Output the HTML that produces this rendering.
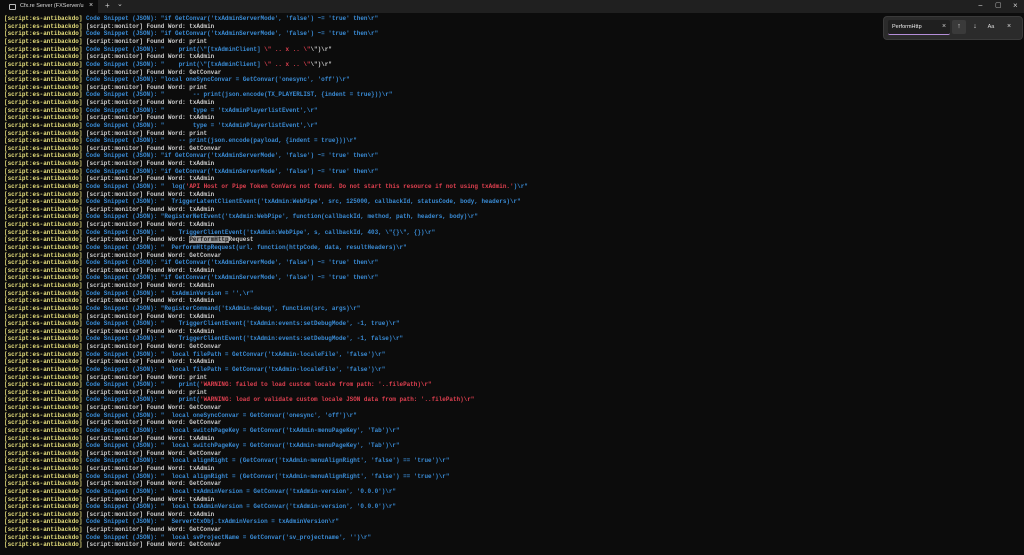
<!DOCTYPE html>
<html><head><meta charset="utf-8"><style>
html,body{margin:0;padding:0;background:#0c0c0c;width:1024px;height:555px;overflow:hidden}
#tb{position:absolute;left:0;top:0;width:1024px;height:13px;background:#202020}
#tab{position:absolute;left:0;top:0;width:98px;height:13px;background:#0c0c0c;font:5.5px "Liberation Sans",sans-serif;color:#ddd}
#tab .t{position:absolute;left:20px;top:3px;white-space:nowrap;width:64px;overflow:hidden}
#tab .i{position:absolute;left:9px;top:4px;width:5px;height:4px;border:1px solid #bbb;border-radius:1px}
#tab .x{position:absolute;left:89px;top:2px;font-size:7px}
.tbi{position:absolute;color:#ccc;font:8px "Liberation Sans",sans-serif}
#term{position:absolute;left:4px;top:15.2px;font-family:"Liberation Mono",monospace;font-size:5.95px;line-height:7.62px;white-space:pre;color:#cccccc;font-weight:bold}
.y{color:#e6df7c}.b{color:#3a8cd6}.r{color:#e04050}.w{color:#cccccc}
.hl{background:#9a9a9a;color:#1a1a1a}
#find{position:absolute;left:883px;top:16px;width:138px;height:22px;background:#2b2b2b;border-radius:4px;border:1px solid #3a3a3a}
#inp{position:absolute;left:4px;top:3px;width:62px;height:14px;background:#1f1f1f;border-radius:2px;border-bottom:1px solid #b48ed8;font:5.5px "Liberation Sans",sans-serif;color:#eee}
#inp span{position:absolute;left:4px;top:4px}
.fb{position:absolute;top:3px;width:14px;height:14px;color:#ddd;font:7px "Liberation Sans",sans-serif;text-align:center;line-height:14px}
</style></head><body>
<div id="tb">
<div id="tab"><div class="i"></div><div class="t">Cfx.re Server (FXServer/unknc</div><div class="x">×</div></div>
<div class="tbi" style="left:105px;top:1px">+</div>
<div class="tbi" style="left:117px;top:0px;font-size:7px">⌄</div>
<div class="tbi" style="left:978px;top:1px">−</div>
<div class="tbi" style="left:995px;top:1px;font-size:7px">▢</div>
<div class="tbi" style="left:1013px;top:1px">×</div>
</div>
<div id="term"><span class="y">[script:es-antibackdo]</span> <span class="b">Code Snippet (JSON): "if GetConvar('txAdminServerMode', 'false') ~= 'true' then\r"</span>
<span class="y">[script:es-antibackdo]</span> <span class="w">[script:monitor] Found Word: txAdmin</span>
<span class="y">[script:es-antibackdo]</span> <span class="b">Code Snippet (JSON): "if GetConvar('txAdminServerMode', 'false') ~= 'true' then\r"</span>
<span class="y">[script:es-antibackdo]</span> <span class="w">[script:monitor] Found Word: print</span>
<span class="y">[script:es-antibackdo]</span> <span class="b">Code Snippet (JSON): "    print(\"[txAdminClient] </span><span class="r">\" .. x .. \"</span><span class="w">\")\r"</span>
<span class="y">[script:es-antibackdo]</span> <span class="w">[script:monitor] Found Word: txAdmin</span>
<span class="y">[script:es-antibackdo]</span> <span class="b">Code Snippet (JSON): "    print(\"[txAdminClient] </span><span class="r">\" .. x .. \"</span><span class="w">\")\r"</span>
<span class="y">[script:es-antibackdo]</span> <span class="w">[script:monitor] Found Word: GetConvar</span>
<span class="y">[script:es-antibackdo]</span> <span class="b">Code Snippet (JSON): "local oneSyncConvar = GetConvar('onesync', 'off')\r"</span>
<span class="y">[script:es-antibackdo]</span> <span class="w">[script:monitor] Found Word: print</span>
<span class="y">[script:es-antibackdo]</span> <span class="b">Code Snippet (JSON): "        -- print(json.encode(TX_PLAYERLIST, {indent = true}))\r"</span>
<span class="y">[script:es-antibackdo]</span> <span class="w">[script:monitor] Found Word: txAdmin</span>
<span class="y">[script:es-antibackdo]</span> <span class="b">Code Snippet (JSON): "        type = 'txAdminPlayerlistEvent',\r"</span>
<span class="y">[script:es-antibackdo]</span> <span class="w">[script:monitor] Found Word: txAdmin</span>
<span class="y">[script:es-antibackdo]</span> <span class="b">Code Snippet (JSON): "        type = 'txAdminPlayerlistEvent',\r"</span>
<span class="y">[script:es-antibackdo]</span> <span class="w">[script:monitor] Found Word: print</span>
<span class="y">[script:es-antibackdo]</span> <span class="b">Code Snippet (JSON): "    -- print(json.encode(payload, {indent = true}))\r"</span>
<span class="y">[script:es-antibackdo]</span> <span class="w">[script:monitor] Found Word: GetConvar</span>
<span class="y">[script:es-antibackdo]</span> <span class="b">Code Snippet (JSON): "if GetConvar('txAdminServerMode', 'false') ~= 'true' then\r"</span>
<span class="y">[script:es-antibackdo]</span> <span class="w">[script:monitor] Found Word: txAdmin</span>
<span class="y">[script:es-antibackdo]</span> <span class="b">Code Snippet (JSON): "if GetConvar('txAdminServerMode', 'false') ~= 'true' then\r"</span>
<span class="y">[script:es-antibackdo]</span> <span class="w">[script:monitor] Found Word: txAdmin</span>
<span class="y">[script:es-antibackdo]</span> <span class="b">Code Snippet (JSON): "  log(</span><span class="r">'API Host or Pipe Token ConVars not found. Do not start this resource if not using txAdmin.'</span><span class="b">)\r"</span>
<span class="y">[script:es-antibackdo]</span> <span class="w">[script:monitor] Found Word: txAdmin</span>
<span class="y">[script:es-antibackdo]</span> <span class="b">Code Snippet (JSON): "  TriggerLatentClientEvent('txAdmin:WebPipe', src, 125000, callbackId, statusCode, body, headers)\r"</span>
<span class="y">[script:es-antibackdo]</span> <span class="w">[script:monitor] Found Word: txAdmin</span>
<span class="y">[script:es-antibackdo]</span> <span class="b">Code Snippet (JSON): "RegisterNetEvent('txAdmin:WebPipe', function(callbackId, method, path, headers, body)\r"</span>
<span class="y">[script:es-antibackdo]</span> <span class="w">[script:monitor] Found Word: txAdmin</span>
<span class="y">[script:es-antibackdo]</span> <span class="b">Code Snippet (JSON): "    TriggerClientEvent('txAdmin:WebPipe', s, callbackId, 403, \"{}\", {})\r"</span>
<span class="y">[script:es-antibackdo]</span> <span class="w">[script:monitor] Found Word: <span class="hl">PerformHttp</span>Request</span>
<span class="y">[script:es-antibackdo]</span> <span class="b">Code Snippet (JSON): "  PerformHttpRequest(url, function(httpCode, data, resultHeaders)\r"</span>
<span class="y">[script:es-antibackdo]</span> <span class="w">[script:monitor] Found Word: GetConvar</span>
<span class="y">[script:es-antibackdo]</span> <span class="b">Code Snippet (JSON): "if GetConvar('txAdminServerMode', 'false') ~= 'true' then\r"</span>
<span class="y">[script:es-antibackdo]</span> <span class="w">[script:monitor] Found Word: txAdmin</span>
<span class="y">[script:es-antibackdo]</span> <span class="b">Code Snippet (JSON): "if GetConvar('txAdminServerMode', 'false') ~= 'true' then\r"</span>
<span class="y">[script:es-antibackdo]</span> <span class="w">[script:monitor] Found Word: txAdmin</span>
<span class="y">[script:es-antibackdo]</span> <span class="b">Code Snippet (JSON): "  txAdminVersion = '',\r"</span>
<span class="y">[script:es-antibackdo]</span> <span class="w">[script:monitor] Found Word: txAdmin</span>
<span class="y">[script:es-antibackdo]</span> <span class="b">Code Snippet (JSON): "RegisterCommand('txAdmin-debug', function(src, args)\r"</span>
<span class="y">[script:es-antibackdo]</span> <span class="w">[script:monitor] Found Word: txAdmin</span>
<span class="y">[script:es-antibackdo]</span> <span class="b">Code Snippet (JSON): "    TriggerClientEvent('txAdmin:events:setDebugMode', -1, true)\r"</span>
<span class="y">[script:es-antibackdo]</span> <span class="w">[script:monitor] Found Word: txAdmin</span>
<span class="y">[script:es-antibackdo]</span> <span class="b">Code Snippet (JSON): "    TriggerClientEvent('txAdmin:events:setDebugMode', -1, false)\r"</span>
<span class="y">[script:es-antibackdo]</span> <span class="w">[script:monitor] Found Word: GetConvar</span>
<span class="y">[script:es-antibackdo]</span> <span class="b">Code Snippet (JSON): "  local filePath = GetConvar('txAdmin-localeFile', 'false')\r"</span>
<span class="y">[script:es-antibackdo]</span> <span class="w">[script:monitor] Found Word: txAdmin</span>
<span class="y">[script:es-antibackdo]</span> <span class="b">Code Snippet (JSON): "  local filePath = GetConvar('txAdmin-localeFile', 'false')\r"</span>
<span class="y">[script:es-antibackdo]</span> <span class="w">[script:monitor] Found Word: print</span>
<span class="y">[script:es-antibackdo]</span> <span class="b">Code Snippet (JSON): "    print(</span><span class="r">'WARNING: failed to load custom locale from path: '..filePath)\r"</span>
<span class="y">[script:es-antibackdo]</span> <span class="w">[script:monitor] Found Word: print</span>
<span class="y">[script:es-antibackdo]</span> <span class="b">Code Snippet (JSON): "    print(</span><span class="r">'WARNING: load or validate custom locale JSON data from path: '..filePath)\r"</span>
<span class="y">[script:es-antibackdo]</span> <span class="w">[script:monitor] Found Word: GetConvar</span>
<span class="y">[script:es-antibackdo]</span> <span class="b">Code Snippet (JSON): "  local oneSyncConvar = GetConvar('onesync', 'off')\r"</span>
<span class="y">[script:es-antibackdo]</span> <span class="w">[script:monitor] Found Word: GetConvar</span>
<span class="y">[script:es-antibackdo]</span> <span class="b">Code Snippet (JSON): "  local switchPageKey = GetConvar('txAdmin-menuPageKey', 'Tab')\r"</span>
<span class="y">[script:es-antibackdo]</span> <span class="w">[script:monitor] Found Word: txAdmin</span>
<span class="y">[script:es-antibackdo]</span> <span class="b">Code Snippet (JSON): "  local switchPageKey = GetConvar('txAdmin-menuPageKey', 'Tab')\r"</span>
<span class="y">[script:es-antibackdo]</span> <span class="w">[script:monitor] Found Word: GetConvar</span>
<span class="y">[script:es-antibackdo]</span> <span class="b">Code Snippet (JSON): "  local alignRight = (GetConvar('txAdmin-menuAlignRight', 'false') == 'true')\r"</span>
<span class="y">[script:es-antibackdo]</span> <span class="w">[script:monitor] Found Word: txAdmin</span>
<span class="y">[script:es-antibackdo]</span> <span class="b">Code Snippet (JSON): "  local alignRight = (GetConvar('txAdmin-menuAlignRight', 'false') == 'true')\r"</span>
<span class="y">[script:es-antibackdo]</span> <span class="w">[script:monitor] Found Word: GetConvar</span>
<span class="y">[script:es-antibackdo]</span> <span class="b">Code Snippet (JSON): "  local txAdminVersion = GetConvar('txAdmin-version', '0.0.0')\r"</span>
<span class="y">[script:es-antibackdo]</span> <span class="w">[script:monitor] Found Word: txAdmin</span>
<span class="y">[script:es-antibackdo]</span> <span class="b">Code Snippet (JSON): "  local txAdminVersion = GetConvar('txAdmin-version', '0.0.0')\r"</span>
<span class="y">[script:es-antibackdo]</span> <span class="w">[script:monitor] Found Word: txAdmin</span>
<span class="y">[script:es-antibackdo]</span> <span class="b">Code Snippet (JSON): "  ServerCtxObj.txAdminVersion = txAdminVersion\r"</span>
<span class="y">[script:es-antibackdo]</span> <span class="w">[script:monitor] Found Word: GetConvar</span>
<span class="y">[script:es-antibackdo]</span> <span class="b">Code Snippet (JSON): "  local svProjectName = GetConvar('sv_projectname', '')\r"</span>
<span class="y">[script:es-antibackdo]</span> <span class="w">[script:monitor] Found Word: GetConvar</span></div>
<div id="find">
<div id="inp"><span>PerformHttp</span><span style="left:54px;top:3px;font-size:7px;color:#ccc">×</span></div>
<div class="fb" style="left:68px;background:#3a3a3a;border-radius:2px">↑</div>
<div class="fb" style="left:84px">↓</div>
<div class="fb" style="left:100px;font-size:5.5px">Aa</div>
<div class="fb" style="left:118px">×</div>
</div>
</body></html>
